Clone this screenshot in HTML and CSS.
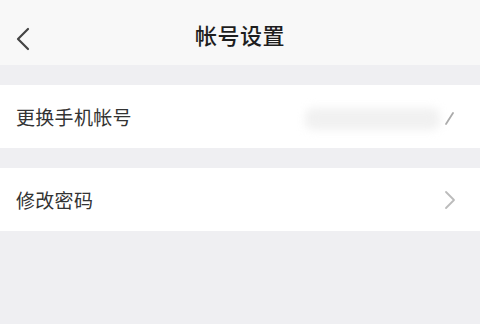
FILE: index.html
```html
<!DOCTYPE html>
<html lang="zh-CN">
<head>
<meta charset="utf-8">
<link rel="stylesheet" href="styles.css">
</head>
<body>
<div class="page">
  <header class="nav">
    <svg class="back" width="14" height="24" viewBox="0 0 14 24"><path d="M12 2 L2 12 L12 22" fill="none" stroke="#444" stroke-width="2.2" stroke-linecap="round" stroke-linejoin="round"/></svg>
    <h1 class="title">帐号设置</h1>
  </header>
  <div class="gap"></div>
  <div class="row">
    <span class="label">更换手机帐号</span>
    <div class="value">
      <span class="blur"></span>
      <svg class="arrow-part" width="12" height="14" viewBox="0 0 12 14"><path d="M9 1 L2 12" fill="none" stroke="#aaa" stroke-width="1.8" stroke-linecap="round"/></svg>
    </div>
  </div>
  <div class="gap"></div>
  <div class="row">
    <span class="label">修改密码</span>
    <svg class="arrow" width="12" height="20" viewBox="0 0 12 20"><path d="M2 2 L10 10 L2 18" fill="none" stroke="#bbb" stroke-width="1.8" stroke-linecap="round" stroke-linejoin="round"/></svg>
  </div>
</div>
</body>
</html>
```
FILE: styles.css
```css
html, body {
  margin: 0;
  padding: 0;
  background: #efeff2;
}
.page {
  width: 480px;
  height: 324px;
  font-family: "Noto Sans CJK SC", "Noto Sans", sans-serif;
  background: #efeff2;
  overflow: hidden;
}
.nav {
  height: 65px;
  background: #f8f8f8;
  display: flex;
  align-items: center;
  justify-content: center;
  position: relative;
}
.back {
  position: absolute;
  left: 16px;
  top: 27px;
}
.title {
  margin: 0;
  font-size: 22px;
  font-weight: 500;
  color: #1e1e1e;
  letter-spacing: 0.5px;
  line-height: 1;
  margin-top: 18px;
  margin-bottom: 16px;
}
.gap {
  height: 20px;
}
.row {
  height: 63px;
  background: #fff;
  display: flex;
  align-items: center;
  justify-content: space-between;
  padding: 0 24px 0 16px;
}
.label {
  font-size: 19px;
  color: #333;
  line-height: 1;
  letter-spacing: 0.3px;
}
.value {
  display: flex;
  align-items: center;
}
.blur {
  width: 135px;
  height: 22px;
  background: #f1f1f1;
  border-radius: 8px;
  filter: blur(4px);
  margin-right: 4px;
  margin-top: 4px;
}
.arrow-part {
  margin-top: 5px;
}
```
